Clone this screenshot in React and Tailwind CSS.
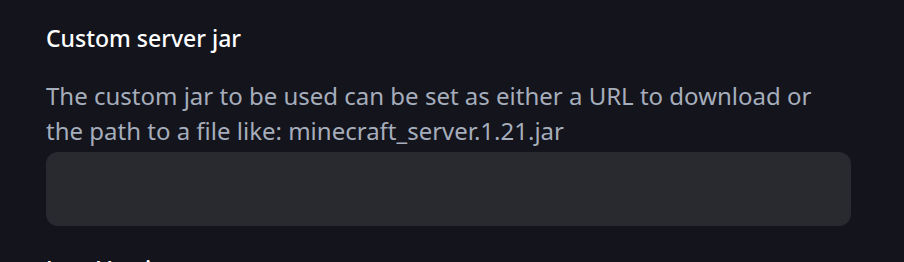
import React from 'react';

const App = () => {
  return (
    <div className="min-h-[262px] w-full bg-[#13141c] pl-[46px] pt-[22px] overflow-hidden" style={{ fontFamily: '"Noto Sans", "Open Sans", sans-serif' }}>
      <div className="flex w-[805px] flex-col">
        <label className="text-[23px] leading-[32px] font-medium text-white">Custom server jar</label>
        <p className="mt-[24px] text-[24px] leading-[35px] text-[#a6adbb]">
          The custom jar to be used can be set as either a URL to download or the path to a file like: minecraft_server.1.21.jar
        </p>
        <input type="text" className="mt-[4px] h-[74px] w-full rounded-[12px] bg-[#292a30] px-4 text-[20px] text-white outline-none" />
      </div>
      <div className="mt-[27px]">
        <label className="text-[23px] leading-[32px] font-medium text-white">Java Version</label>
      </div>
    </div>
  );
};

export default App;
